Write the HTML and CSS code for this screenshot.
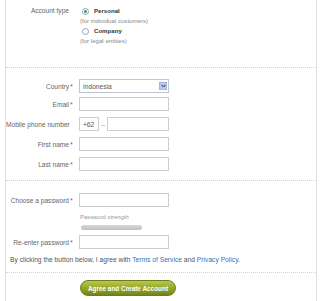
FILE: index.html
```html
<!DOCTYPE html>
<html lang="en">

<head>
  <meta charset="UTF-8">
  <meta name="viewport" content="width=device-width, initial-scale=1.0">
  <title>Create account</title>
  <link rel="stylesheet" href="styles.css">
</head>

<body>

  <div class="panel">

    <div class="section section-type">
      <div class="row-type">
        <div class="label no-req">Account type</div>
        <div class="options">
          <div class="option"><span class="radio checked"></span><b>Personal</b></div>
          <div class="hint">(for individual customers)</div>
          <div class="option"><span class="radio"></span><b>Company</b></div>
          <div class="hint">(for legal entities)</div>
        </div>
      </div>
    </div>

    <div class="section section-info">
      <div class="row row-first">
        <div class="label">Country<span class="req">*</span></div>
        <div class="select">
          <span>Indonesia</span>
          <span class="arrow">
            <svg width="5" height="4" viewBox="0 0 5 4"><path d="M0.5 0.8 L2.5 3 L4.5 0.8" fill="none" stroke="#333" stroke-width="1"/></svg>
          </span>
        </div>
      </div>
      <div class="row">
        <div class="label">Email<span class="req">*</span></div>
        <input class="field" type="text">
      </div>
      <div class="row">
        <div class="label no-req">Mobile phone number</div>
        <input class="field code" type="text" value="+62">
        <span class="dash">&ndash;</span>
        <input class="field phone" type="text">
      </div>
      <div class="row">
        <div class="label">First name<span class="req">*</span></div>
        <input class="field" type="text">
      </div>
      <div class="row">
        <div class="label">Last name<span class="req">*</span></div>
        <input class="field" type="text">
      </div>
    </div>

    <div class="section section-pass">
      <div class="row">
        <div class="label">Choose a password<span class="req">*</span></div>
        <input class="field" type="password">
      </div>
      <div class="strength">
        <div class="strength-text">Password strength</div>
        <div class="strength-bar"></div>
      </div>
      <div class="row">
        <div class="label">Re-enter password<span class="req">*</span></div>
        <input class="field" type="password">
      </div>
      <p class="terms">By clicking the button below, I agree with <a href="#">Terms of Service</a> and <a href="#">Privacy Policy</a>.</p>
    </div>

    <div class="section section-submit">
      <button class="btn" type="button">Agree and Create Account</button>
    </div>

  </div>

</body>

</html>
```

FILE: styles.css
```css
/* registration form */
body {
  font-family: "Liberation Sans", Arial, sans-serif;
  font-size: 6.6px;
  color: #666;
  margin: 0;
  padding: 0;
  background-color: #fff;
}

.panel {
  margin: 0 3px 0 5px;
  border: 1px solid #e2e2e2;
  border-top: none;
  border-radius: 0 0 3px 3px;
}

.section {
  border-bottom: 1px dotted #d4d4d4;
}

.section-type {
  padding: 6px 0 21px;
}

.section-info {
  padding: 11px 0 9px;
}

.section-pass {
  padding: 12px 0 7px;
}

.section-submit {
  padding: 7px 0 7px 74px;
  border-bottom: none;
}

.row-type {
  display: flex;
  line-height: 10px;
}

.label {
  width: 68px;
  flex: none;
  text-align: right;
  margin-right: 5px;
  white-space: nowrap;
}

.label.no-req {
  padding-right: 5px;
  width: 63px;
}

.req {
  display: inline-block;
  width: 5px;
  text-align: center;
  color: #e02b2b;
}

.options {
  padding-left: 1px;
}

.option {
  display: flex;
  align-items: center;
  color: #333;
}

.option b {
  font-size: 6.1px;
}

.radio {
  width: 5px;
  height: 5px;
  border: 1px solid #8ea3bd;
  border-radius: 50%;
  margin: 0 5px 0 2px;
  position: relative;
  background: #fff;
}

.radio.checked::after {
  content: "";
  position: absolute;
  left: 1px;
  top: 1px;
  width: 3px;
  height: 3px;
  border-radius: 50%;
  background: #3ea33e;
}

.hint {
  font-size: 6.1px;
  color: #888;
}

.row {
  display: flex;
  align-items: center;
  height: 14px;
  margin-bottom: 6px;
}

.row:last-child {
  margin-bottom: 0;
}

.row-first {
  margin-bottom: 4px;
}

.field {
  box-sizing: border-box;
  width: 90px;
  height: 14px;
  padding: 0 3px;
  margin: 0;
  font-family: inherit;
  font-size: 6.6px;
  color: #555;
  border: 1px solid #c8cfd6;
  border-radius: 0;
  outline: none;
}

.field.code {
  width: 20px;
}

.field.phone {
  width: 62px;
}

.dash {
  width: 8px;
  text-align: center;
  color: #999;
}

.select {
  box-sizing: border-box;
  width: 90px;
  height: 14px;
  padding: 0 1px 0 3px;
  display: flex;
  align-items: center;
  justify-content: space-between;
  border: 1px solid #bcc5ce;
  color: #555;
}

.arrow {
  width: 8px;
  height: 8px;
  display: flex;
  align-items: center;
  justify-content: center;
  background: #b8c8f2;
  border: 1px solid #a3b6e2;
  box-sizing: border-box;
}

.strength {
  padding-left: 74px;
  margin-top: 3px;
}

.strength-text {
  font-size: 5.9px;
  color: #999;
  line-height: 8px;
}

.strength-bar {
  width: 61px;
  height: 5px;
  margin: 4px 0 5px 1px;
  border-radius: 3px;
  background: linear-gradient(#d8d8d8, #c0c0c0);
}

.terms {
  margin: 4px 0 0 4px;
  line-height: 10px;
  font-size: 6.7px;
  color: #555;
}

.terms a {
  color: #2f72c0;
  text-decoration: none;
}

.btn {
  width: 96px;
  height: 16px;
  padding: 0;
  border: 1px solid #6d7c14;
  border-radius: 8px;
  background: linear-gradient(#b7c74e, #93a528 55%, #738417);
  color: #fff;
  font-family: inherit;
  font-size: 6.4px;
  font-weight: bold;
  cursor: pointer;
}
```
